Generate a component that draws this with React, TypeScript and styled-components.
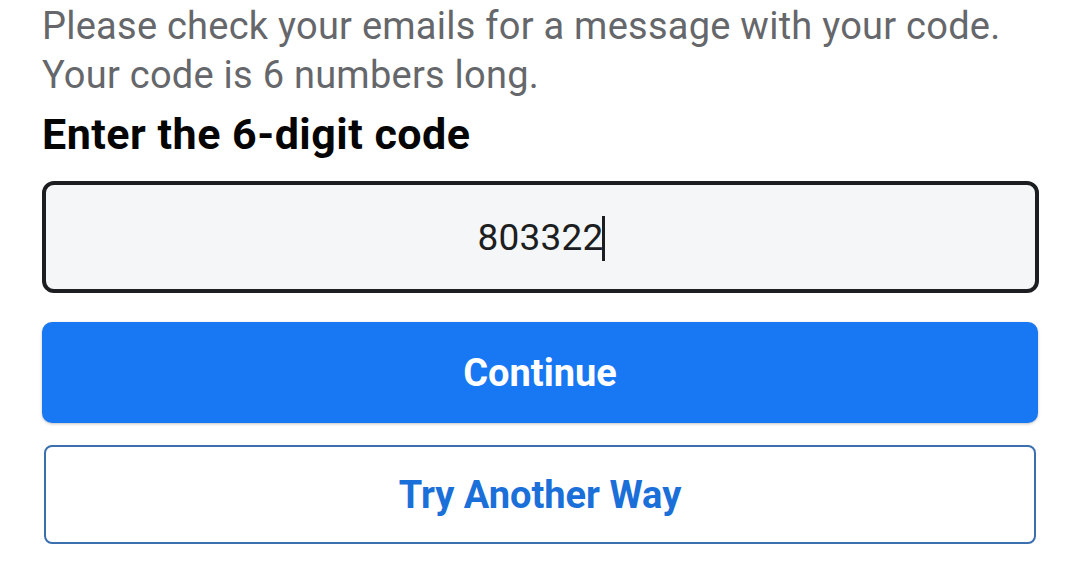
import React from 'react'
import styled, { createGlobalStyle } from 'styled-components'

const GlobalStyle = createGlobalStyle`
    html, body {
        margin: 0;
        padding: 0;
        background: #ffffff;
        font-family: Roboto, "Noto Sans", "Liberation Sans", sans-serif;
    }
`

const Page = styled.div`
    display: flex;
    flex-direction: column;
    padding: 2px 42px 0 42px;
    width: 997px;
`

const Info = styled.p`
    margin: 0;
    font-size: 38px;
    line-height: 49px;
    letter-spacing: 0.25px;
    color: #65676b;
    white-space: nowrap;
`

const Heading = styled.h2`
    margin: 9px 0 0 0;
    font-size: 43px;
    line-height: 50px;
    letter-spacing: 0.5px;
    font-weight: 700;
    color: #050505;
`

const CodeField = styled.div`
    margin-top: 22px;
    height: 112px;
    box-sizing: border-box;
    border: 4px solid #1c1e21;
    border-radius: 12px;
    background: #f5f6f7;
    display: flex;
    align-items: center;
    justify-content: center;
    padding-left: 2px;
    font-size: 37px;
    letter-spacing: 0.2px;
    color: #1c1e21;
`

const Caret = styled.span`
    display: inline-block;
    width: 3px;
    height: 45px;
    margin-left: -1px;
    margin-top: 2px;
    background: #1c1e21;
`

const Button = styled.div<{ $primary?: boolean }>`
    box-sizing: border-box;
    display: flex;
    align-items: center;
    justify-content: center;
    font-size: 38px;
    font-weight: 700;
    height: ${p => (p.$primary ? '101px' : '99px')};
    margin-top: ${p => (p.$primary ? '29px' : '22px')};
    margin-left: ${p => (p.$primary ? '0' : '2px')};
    margin-right: ${p => (p.$primary ? '1px' : '3px')};
    border-radius: ${p => (p.$primary ? '10px' : '8px')};
    background: ${p => (p.$primary ? '#1877f2' : '#ffffff')};
    color: ${p => (p.$primary ? '#ffffff' : '#1a6fd9')};
    border: ${p => (p.$primary ? 'none' : '2px solid #3b6fae')};
    box-shadow: ${p => (p.$primary ? '0 1px 3px rgba(0,0,0,0.25)' : 'none')};
`

const App = () => {
    return (
        <>
            <GlobalStyle />
            <Page>
                <Info>
                    Please check your emails for a message with your code.
                    <br />
                    Your code is 6 numbers long.
                </Info>
                <Heading>Enter the 6-digit code</Heading>
                <CodeField>
                    803322<Caret />
                </CodeField>
                <Button $primary>Continue</Button>
                <Button>Try Another Way</Button>
            </Page>
        </>
    )
}

export default App
